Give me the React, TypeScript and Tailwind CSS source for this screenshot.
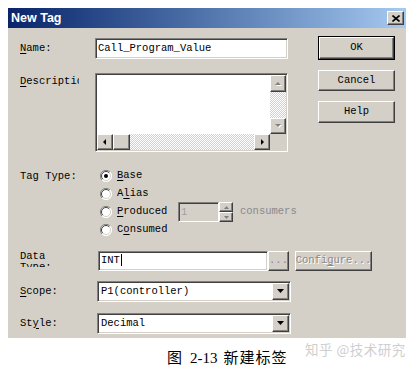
import type { ReactNode } from 'react'

const mono = "font-['Liberation_Mono','DejaVu_Sans_Mono',monospace] text-[10.5px] text-black"
const sunken =
  'border border-t-[#808080] border-l-[#808080] border-b-white border-r-white shadow-[inset_1px_1px_0_#404040,inset_-1px_-1px_0_#d4d0c8]'
const raised =
  'border border-t-white border-l-white border-b-[#404040] border-r-[#404040] shadow-[inset_-1px_-1px_0_#808080] bg-[#d4d0c8]'

function U({ children }: { children: ReactNode }) {
  return <span className="underline underline-offset-[2px]">{children}</span>
}

function Btn({ children, className = '', isDefault = false }: { children: ReactNode; className?: string; isDefault?: boolean }) {
  if (isDefault) {
    return (
      <div className={`border border-black ${className}`}>
        <div className={`flex h-full w-full items-center justify-center ${raised}`}>{children}</div>
      </div>
    )
  }
  return <div className={`flex items-center justify-center ${raised} ${className}`}>{children}</div>
}

function Arrow({ dir, gray = false }: { dir: 'up' | 'down' | 'left' | 'right'; gray?: boolean }) {
  const pts = {
    up: '1,5 4,2 7,5',
    down: '1,2 4,5 7,2',
    left: '5,1 2,4 5,7',
    right: '3,1 6,4 3,7',
  }[dir]
  return (
    <svg width="8" height="8" viewBox="0 0 8 8">
      {gray && <polygon points={pts} fill="#ffffff" transform="translate(1,1)" />}
      <polygon points={pts} fill={gray ? '#808080' : '#000000'} />
    </svg>
  )
}

function Radio({ checked = false }: { checked?: boolean }) {
  return (
    <svg width="12" height="12" viewBox="0 0 12 12" className="shrink-0">
      <circle cx="6" cy="6" r="5.5" fill="#ffffff" />
      <path d="M10 2 A5.5 5.5 0 0 0 2 10" stroke="#808080" strokeWidth="1" fill="none" />
      <path d="M9.2 2.8 A4.5 4.5 0 0 0 2.8 9.2" stroke="#404040" strokeWidth="1" fill="none" />
      <path d="M2 10 A5.5 5.5 0 0 0 10 2" stroke="#ffffff" strokeWidth="1" fill="none" />
      <path d="M2.8 9.2 A4.5 4.5 0 0 0 9.2 2.8" stroke="#d4d0c8" strokeWidth="1" fill="none" />
      {checked && <circle cx="6" cy="6" r="2" fill="#000000" />}
    </svg>
  )
}

function Select({ value }: { value: string }) {
  return (
    <div className={`flex h-[21px] w-[194px] items-center bg-white ${sunken}`}>
      <div className="flex-1 pl-[3px] pt-[1px]">{value}</div>
      <div className={`mr-[1px] flex h-[17px] w-[17px] items-center justify-center ${raised}`}>
        <svg width="8" height="5" viewBox="0 0 8 5">
          <polygon points="0,0 7,0 3.5,4" fill="#000000" />
        </svg>
      </div>
    </div>
  )
}

const track = 'bg-[repeating-conic-gradient(#ffffff_0_25%,#d4d0c8_0_50%)] bg-[length:2px_2px]'

export default function App() {
  return (
    <div className={`relative h-[372px] w-[413px] overflow-hidden bg-white ${mono}`}>
      <div className="ml-[8px] mt-[8px] h-[330px] w-[398px] bg-[#d4d0c8]">
        {/* title bar */}
        <div className="flex h-[20px] items-center bg-gradient-to-r from-[#0a246a] to-[#a6caf0] pl-[3px] pr-[2px]">
          <span className="flex-1 font-['Liberation_Sans',Arial,sans-serif] text-[12.5px] font-bold text-white">New Tag</span>
          <div className={`flex h-[14px] w-[17px] items-center justify-center ${raised}`}>
            <svg width="8" height="7" viewBox="0 0 8 7">
              <path d="M0.5 0.5 L7.5 6.5 M7.5 0.5 L0.5 6.5" stroke="#000" strokeWidth="1.6" />
            </svg>
          </div>
        </div>

        <div className="flex flex-col pl-[12px] pt-[8px]">
          {/* Name */}
          <div className="flex h-[24px]">
            <div className="w-[75px] pt-[5px]">
              <U>N</U>ame:
            </div>
            <div className={`mt-[2px] h-[21px] w-[193px] bg-white pl-[2px] leading-[18px] ${sunken}`}>Call_Program_Value</div>
            <Btn isDefault className="ml-[30px] h-[24px] w-[77px]">OK</Btn>
          </div>

          {/* Description */}
          <div className="mt-[13px] flex">
            <div className="mr-[16px] w-[59px] overflow-hidden whitespace-nowrap pt-[1px]">
              <U>D</U>escription
            </div>
            <div className={`flex h-[79px] w-[193px] flex-col bg-white ${sunken}`}>
              <div className="flex flex-1 p-[1px] pb-0">
                <div className="flex-1" />
                <div className={`flex w-[16px] flex-col ${track}`}>
                  <div className={`flex h-[17px] items-center justify-center ${raised}`}>
                    <Arrow dir="up" gray />
                  </div>
                  <div className="flex-1" />
                  <div className={`flex h-[16px] items-center justify-center ${raised}`}>
                    <Arrow dir="down" gray />
                  </div>
                </div>
              </div>
              <div className="flex h-[17px] px-[1px] pb-[1px]">
                <div className={`flex flex-1 ${track}`}>
                  <div className={`flex w-[16px] items-center justify-center ${raised}`}>
                    <Arrow dir="left" />
                  </div>
                  <div className={`w-[17px] ${raised}`} />
                  <div className="flex-1" />
                  <div className={`flex w-[16px] items-center justify-center ${raised}`}>
                    <Arrow dir="right" />
                  </div>
                </div>
                <div className="w-[16px] bg-[#d4d0c8]" />
              </div>
            </div>
            <div className="-mt-[3px] ml-[30px] flex flex-col">
              <Btn className="h-[21px] w-[77px]">Cancel</Btn>
              <Btn className="mt-[10px] h-[22px] w-[77px]">Help</Btn>
            </div>
          </div>

          {/* Tag Type */}
          <div className="mt-[15px] flex">
            <div className="w-[75px] pt-[2px]">Tag Type:</div>
            <div className="flex flex-col pl-[5px]">
              <div className="flex h-[18px] items-center gap-[5px]">
                <Radio checked />
                <span>
                  <U>B</U>ase
                </span>
              </div>
              <div className="flex h-[18px] items-center gap-[5px]">
                <Radio />
                <span>
                  A<U>l</U>ias
                </span>
              </div>
              <div className="flex h-[18px] items-center">
                <div className="flex w-[78px] items-center gap-[5px]">
                  <Radio />
                  <span>
                    <U>P</U>roduced
                  </span>
                </div>
                <div className={`h-[20px] w-[41px] pl-[2px] leading-[18px] text-[#a0a0a0] ${sunken}`}>1</div>
                <div className="flex h-[20px] w-[14px] flex-col">
                  <div className={`flex h-[10px] items-center justify-center ${raised}`}>
                    <svg width="5" height="3" viewBox="0 0 5 3">
                      <polygon points="0,3 5,3 2.5,0" fill="#808080" />
                    </svg>
                  </div>
                  <div className={`flex h-[10px] items-center justify-center ${raised}`}>
                    <svg width="5" height="3" viewBox="0 0 5 3">
                      <polygon points="0,0 5,0 2.5,3" fill="#808080" />
                    </svg>
                  </div>
                </div>
                <span className="ml-[7px] text-[#8a8a8a]">consumers</span>
              </div>
              <div className="flex h-[18px] items-center gap-[5px]">
                <Radio />
                <span>
                  C<U>o</U>nsumed
                </span>
              </div>
            </div>
          </div>

          {/* Data Type */}
          <div className="mt-[12px] flex">
            <div className="flex h-[16px] w-[78px] flex-col overflow-hidden leading-[11px]">
              <span>Data</span>
              <span>Type:</span>
            </div>
            <div className={`h-[20px] w-[170px] bg-white pl-[2px] leading-[17px] ${sunken}`}>
              INT<span className="ml-[1px] inline-block h-[12px] w-[1px] bg-black align-middle" />
            </div>
            <Btn className="h-[20px] w-[21px] text-[#8a8a8a]">...</Btn>
            <Btn className="ml-[6px] h-[20px] w-[77px] text-[#8a8a8a] [text-shadow:1px_1px_0_#ffffff]">
              Confi<U>g</U>ure...
            </Btn>
          </div>

          {/* Scope */}
          <div className="mt-[10px] flex items-center">
            <div className="w-[77px]">
              <U>S</U>cope:
            </div>
            <Select value="P1(controller)" />
          </div>

          {/* Style */}
          <div className="mt-[11px] flex items-center">
            <div className="w-[77px]">
              St<U>y</U>le:
            </div>
            <Select value="Decimal" />
          </div>
        </div>
      </div>

      {/* caption */}
      <div className="flex pl-[167px] pt-[12px] font-['Liberation_Serif','Noto_Sans_CJK_SC',serif] text-[15px] leading-[16px] text-black">
        <span>图</span>
        <span className="ml-[8px]">2-13</span>
        <span className="ml-[6px] tracking-[1px]">新建标签</span>
      </div>
      <div className="absolute left-[305px] top-[339px] font-['Noto_Sans_CJK_SC',sans-serif] text-[13.5px] tracking-[0.5px] text-[#cfcfcf]">
        知乎 @技术研究
      </div>
    </div>
  )
}
